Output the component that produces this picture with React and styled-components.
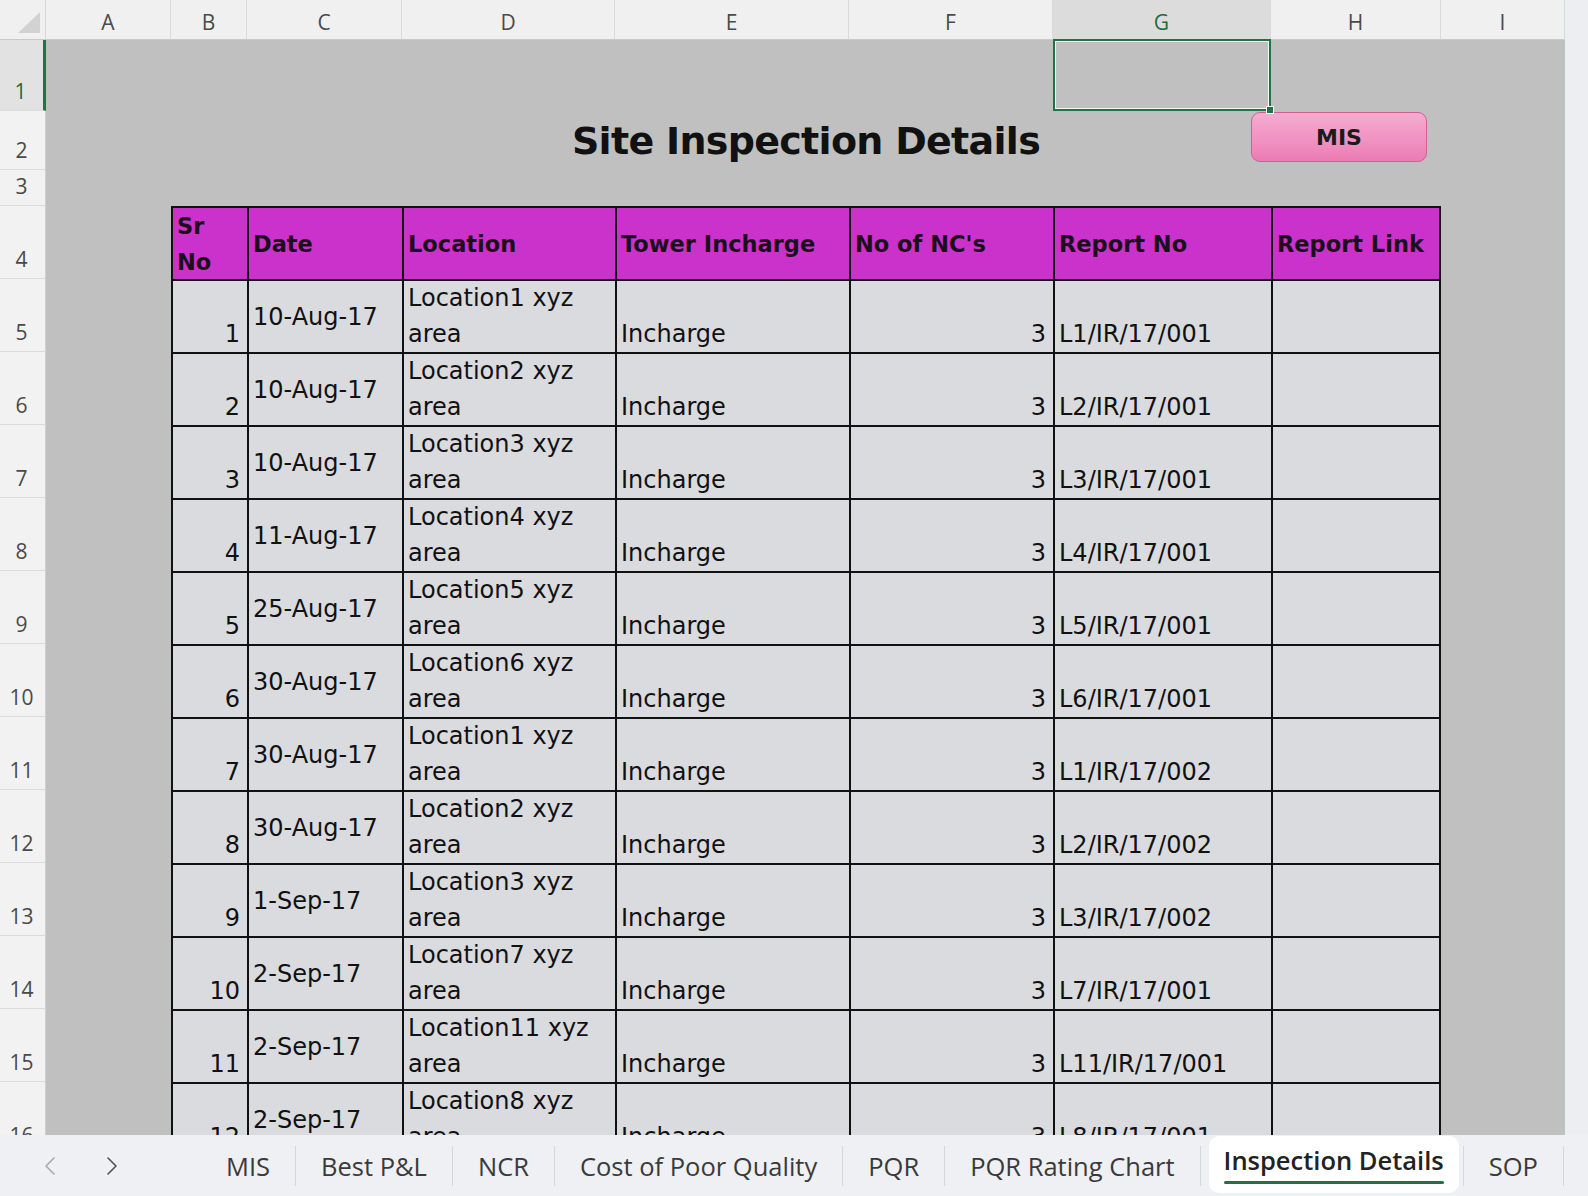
import React from 'react';
import styled, { createGlobalStyle, css } from 'styled-components';

const GlobalStyle = createGlobalStyle`
  html, body { margin: 0; padding: 0; width: 1588px; height: 1196px; overflow: hidden; background: #eceef1; }
  #root { width: 1588px; height: 1196px; }
  *, *::before, *::after { box-sizing: border-box; }
`;

const Window = styled.div`
  display: flex;
  flex-direction: column;
  width: 1588px;
  height: 1196px;
`;

const SheetArea = styled.div`
  display: flex;
  height: 1135px;
  overflow: hidden;
  flex: none;
`;

const Grid = styled.div`
  display: grid;
  grid-template-columns: 46px 125px 76px 155px 213px 234px 204px 218px 170px 124px;
  grid-template-rows: 40px 71px 59px 36px repeat(13, 73px);
  width: 1565px;
  flex: none;
  background: #c0c0c0;
  font-family: "DejaVu Sans", Verdana, sans-serif;
`;

const ScrollStrip = styled.div`
  flex: 1;
  background: #eceef1;
`;

const Corner = styled.div`
  grid-row: 1;
  grid-column: 1;
  background: #f0f0f0;
  border-right: 1px solid #d6d6d6;
  border-bottom: 1px solid #c9c9c9;
  display: flex;
  align-items: flex-end;
  justify-content: flex-end;
  padding: 0 5px 6px 0;
`;

const ColHead = styled.div`
  grid-row: 1;
  grid-column: ${(p) => p.$col};
  background: ${(p) => (p.$active ? '#dcdcdc' : '#f0f0f0')};
  color: ${(p) => (p.$active ? '#1e6b40' : '#4a4a4a')};
  border-right: 1px solid #dadada;
  border-bottom: 1px solid #c9c9c9;
  display: flex;
  align-items: center;
  justify-content: center;
  padding-top: 5px;
  font-family: "Open Sans", sans-serif;
  font-size: 21px;
`;

const RowHead = styled.div`
  grid-row: ${(p) => p.$row};
  grid-column: 1;
  background: ${(p) => (p.$active ? '#e2e2e2' : '#f2f2f2')};
  color: ${(p) => (p.$active ? '#1e6b40' : '#4a4a4a')};
  border-bottom: 1px solid #dcdcdc;
  border-right: ${(p) => (p.$active ? '3px solid #217346' : '1px solid #cfcfcf')};
  display: flex;
  align-items: flex-end;
  justify-content: center;
  padding: 0 2px 6px 0;
  font-family: "Open Sans", sans-serif;
  font-size: 21px;
  line-height: 26px;
`;

const SelectedCell = styled.div`
  grid-row: 2;
  grid-column: 8;
  position: relative;
  margin-top: -1px;
  border: 2px solid #217346;
  box-shadow: inset 0 0 0 1px rgba(255, 255, 255, 0.85);
`;

const FillHandle = styled.span`
  position: absolute;
  right: -5px;
  bottom: -5px;
  width: 8px;
  height: 8px;
  background: #217346;
  border: 1px solid #ffffff;
`;

const Title = styled.h1`
  grid-row: 3;
  grid-column: 3 / 10;
  margin: 0;
  display: flex;
  align-items: center;
  justify-content: center;
  font-size: 38px;
  letter-spacing: -0.7px;
  font-weight: 700;
  color: #111;
`;

const ShapeButton = styled.button`
  grid-row: 3;
  grid-column: 8 / 10;
  justify-self: end;
  align-self: start;
  margin: 1px 14px 0 0;
  width: 176px;
  height: 50px;
  border: 1.5px solid #d45d95;
  border-radius: 9px;
  background: linear-gradient(180deg, #f5acd0 0%, #f093c2 55%, #eb7cb4 100%);
  font-family: "DejaVu Sans", Verdana, sans-serif;
  font-size: 22px;
  font-weight: 700;
  color: #1b1b1b;
  padding: 0;
  cursor: pointer;
`;

const Cell = styled.div`
  grid-row: ${(p) => p.$row};
  grid-column: ${(p) => p.$col};
  background: ${(p) => (p.$head ? '#cb32cb' : '#dadbde')};
  border-top: 2px solid #111;
  border-left: 2px solid #111;
  ${(p) => p.$last && css`border-right: 2px solid #111;`}
  display: flex;
  flex-direction: column;
  justify-content: ${(p) => (p.$valign === 'center' ? 'center' : 'flex-end')};
  text-align: ${(p) => p.$align || 'left'};
  padding: ${(p) => (p.$align === 'right' ? '0 7px 0 2px' : '0 2px 0 4px')};
  font-size: ${(p) => (p.$head ? '22.5px' : '24px')};
  line-height: 36px;
  font-weight: ${(p) => (p.$head ? 700 : 400)};
  color: ${(p) => (p.$head ? '#1c0f1c' : '#111')};
  overflow: hidden;
  white-space: normal;
`;

const TabBar = styled.div`
  flex: 1;
  display: flex;
  align-items: stretch;
  background: #eef0f3;
  font-family: "Open Sans", sans-serif;
  overflow: hidden;
  white-space: nowrap;
`;

const Nav = styled.div`
  width: 201px;
  flex: none;
  display: flex;
  align-items: center;
  gap: 50px;
  padding-left: 44px;
`;

const Arrow = styled.svg`
  width: 12px;
  height: 20px;
  fill: none;
  stroke: ${(p) => (p.$disabled ? '#a8a8a8' : '#505050')};
  stroke-width: 1.6;
  stroke-linecap: round;
  stroke-linejoin: round;
`;

const Tab = styled.div`
  flex: none;
  display: flex;
  align-items: ${(p) => (p.$active ? 'stretch' : 'center')};
  padding: ${(p) => (p.$active ? '1px 4px 3px 8px' : '0 10px')};
`;

const TabLabel = styled.span`
  display: flex;
  flex-direction: column;
  padding: ${(p) => (p.$active ? '8px 15px 0' : '0 15px')};
  font-size: 25.5px;
  line-height: 32px;
  color: #3a3a3a;
  ${(p) =>
    p.$active &&
    css`
      background: #ffffff;
      border-radius: 10px;
      font-weight: 600;
      color: #222;
      &::after {
        content: '';
        display: block;
        height: 3px;
        margin-top: 5px;
        border-radius: 2px;
        background: #217346;
      }
    `}
`;

const Separator = styled.span`
  flex: none;
  align-self: center;
  width: 1px;
  height: 40px;
  background: #d5d7da;
`;

const COLS = ['A', 'B', 'C', 'D', 'E', 'F', 'G', 'H', 'I'];

const HEADERS = ['Sr\nNo', 'Date', 'Location', 'Tower Incharge', "No of NC's", 'Report No', 'Report Link'];

const ROWS = [
  ['1', '10-Aug-17', 'Location1 xyz area', 'L1/IR/17/001'],
  ['2', '10-Aug-17', 'Location2 xyz area', 'L2/IR/17/001'],
  ['3', '10-Aug-17', 'Location3 xyz area', 'L3/IR/17/001'],
  ['4', '11-Aug-17', 'Location4 xyz area', 'L4/IR/17/001'],
  ['5', '25-Aug-17', 'Location5 xyz area', 'L5/IR/17/001'],
  ['6', '30-Aug-17', 'Location6 xyz area', 'L6/IR/17/001'],
  ['7', '30-Aug-17', 'Location1 xyz area', 'L1/IR/17/002'],
  ['8', '30-Aug-17', 'Location2 xyz area', 'L2/IR/17/002'],
  ['9', '1-Sep-17', 'Location3 xyz area', 'L3/IR/17/002'],
  ['10', '2-Sep-17', 'Location7 xyz area', 'L7/IR/17/001'],
  ['11', '2-Sep-17', 'Location11 xyz area', 'L11/IR/17/001'],
  ['12', '2-Sep-17', 'Location8 xyz area', 'L8/IR/17/001'],
];

const TABS = ['MIS', 'Best P&L', 'NCR', 'Cost of Poor Quality', 'PQR', 'PQR Rating Chart', 'Inspection Details', 'SOP', 'Tracker'];

export default function App() {
  return (
    <Window>
      <GlobalStyle />
      <SheetArea>
        <Grid>
          <Corner>
            <svg width="22" height="21" viewBox="0 0 22 21">
              <polygon points="22,0 22,21 0,21" fill="#d2d2d2" />
            </svg>
          </Corner>
          {COLS.map((c, i) => (
            <ColHead key={c} $col={i + 2} $active={c === 'G'}>
              {c}
            </ColHead>
          ))}
          {Array.from({ length: 16 }, (_, i) => (
            <RowHead key={i} $row={i + 2} $active={i === 0}>
              {i + 1}
            </RowHead>
          ))}

          <SelectedCell>
            <FillHandle />
          </SelectedCell>

          <Title>Site Inspection Details</Title>
          <ShapeButton>MIS</ShapeButton>

          {HEADERS.map((h, i) => (
            <Cell key={h} $row={5} $col={i + 3} $head $last={i === HEADERS.length - 1} $valign="center">
              {h.split('\n').map((line) => (
                <span key={line}>{line}</span>
              ))}
            </Cell>
          ))}

          {ROWS.map((r, i) => {
            const row = i + 6;
            return (
              <React.Fragment key={i}>
                <Cell $row={row} $col={3} $align="right">{r[0]}</Cell>
                <Cell $row={row} $col={4} $valign="center">{r[1]}</Cell>
                <Cell $row={row} $col={5}>{r[2]}</Cell>
                <Cell $row={row} $col={6}>Incharge</Cell>
                <Cell $row={row} $col={7} $align="right">3</Cell>
                <Cell $row={row} $col={8}>{r[3]}</Cell>
                <Cell $row={row} $col={9} $last />
              </React.Fragment>
            );
          })}
        </Grid>
        <ScrollStrip />
      </SheetArea>

      <TabBar>
        <Nav>
          <Arrow viewBox="0 0 12 20" $disabled>
            <polyline points="10,2 2,10 10,18" />
          </Arrow>
          <Arrow viewBox="0 0 12 20">
            <polyline points="2,2 10,10 2,18" />
          </Arrow>
        </Nav>
        {TABS.map((t, i) => (
          <React.Fragment key={t}>
            {i > 0 && <Separator />}
            <Tab $active={t === 'Inspection Details'}>
              <TabLabel $active={t === 'Inspection Details'}>{t}</TabLabel>
            </Tab>
          </React.Fragment>
        ))}
      </TabBar>
    </Window>
  );
}
